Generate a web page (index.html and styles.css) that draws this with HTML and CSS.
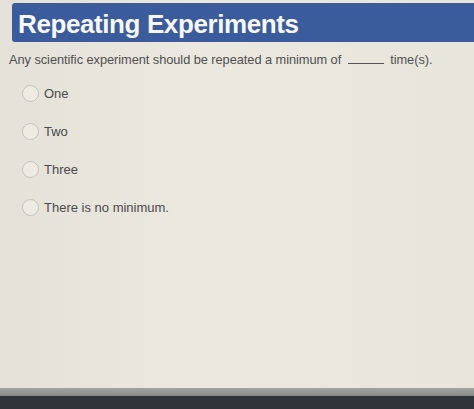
FILE: index.html
```html
<!DOCTYPE html>
<html>
<head>
<meta charset="utf-8">
<link rel="stylesheet" href="styles.css">
</head>
<body>
<div class="screen">
  <div class="page">
    <div class="banner"><h1 class="title">Repeating Experiments</h1></div>
    <p class="question">Any scientific experiment should be repeated a minimum of <span class="blank"></span> time(s).</p>
    <ul class="options">
      <li class="option"><span class="radio"></span><span class="label">One</span></li>
      <li class="option"><span class="radio"></span><span class="label">Two</span></li>
      <li class="option"><span class="radio"></span><span class="label">Three</span></li>
      <li class="option"><span class="radio"></span><span class="label">There is no minimum.</span></li>
    </ul>
  </div>
  <div class="bezel"></div>
  <div class="desk"></div>
</div>
</body>
</html>
```
FILE: styles.css
```css
html, body {
  margin: 0;
  padding: 0;
}
body {
  width: 474px;
  height: 409px;
  overflow: hidden;
  background: #2f3439;
  font-family: "Liberation Sans", Arial, sans-serif;
}
.screen {
  display: flex;
  flex-direction: column;
  height: 409px;
}
.page {
  flex: 1;
  background: linear-gradient(90deg, #e4e1d8 0%, #ebe8df 40%, #e8e5dc 100%);
  padding-top: 3px;
  display: flex;
  flex-direction: column;
}
.banner {
  margin-left: 12px;
  height: 39px;
  background: #3a5c9d;
  border-radius: 3px 0 0 3px;
  padding-left: 6px;
  display: flex;
  align-items: center;
}
.title {
  margin: 0;
  color: #f7f7f7;
  font-size: 26px;
  font-weight: bold;
  letter-spacing: -0.4px;
  line-height: 1;
  padding-top: 3px;
}
.question {
  margin: 10px 0 0 9px;
  color: #4f4f4f;
  font-size: 12.8px;
  letter-spacing: -0.05px;
  line-height: 16px;
}
.blank {
  display: inline-block;
  width: 36px;
  border-bottom: 1px solid #555;
  margin: 0 3px;
}
.options {
  list-style: none;
  margin: 17px 0 0 0;
  padding: 0 0 0 22px;
  display: flex;
  flex-direction: column;
  gap: 21px;
}
.option {
  display: flex;
  align-items: center;
  gap: 5px;
  height: 17px;
}
.radio {
  width: 15px;
  height: 15px;
  border: 1px solid #c4c2bc;
  border-radius: 50%;
  background: #eeebe3;
}
.label {
  color: #4a4a4a;
  font-size: 13px;
}
.bezel {
  height: 8px;
  background: linear-gradient(180deg, #a3a4a2 0%, #86898a 100%);
}
.desk {
  height: 13px;
  background: #2f3439;
}
```
